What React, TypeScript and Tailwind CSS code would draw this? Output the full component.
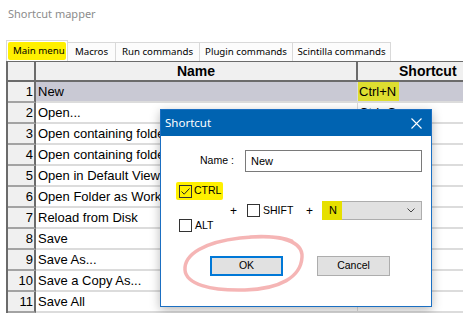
import React from "react";

const rows: [string, string][] = [
  ["New", "Ctrl+N"],
  ["Open...", "Ctrl+O"],
  ["Open containing folder - Explorer", ""],
  ["Open containing folder - cmd", ""],
  ["Open in Default Viewer", ""],
  ["Open Folder as Workspace", ""],
  ["Reload from Disk", ""],
  ["Save", ""],
  ["Save As...", ""],
  ["Save a Copy As...", ""],
  ["Save All", ""],
];

const tabs = [
  { label: "Macros", w: "w-[48px]" },
  { label: "Run commands", w: "w-[84px]" },
  { label: "Plugin commands", w: "w-[93px]" },
  { label: "Scintilla commands", w: "w-[98px]" },
];

function Checkbox({ checked, clear }: { checked?: boolean; clear?: boolean }) {
  return (
    <span
      className={`w-[13px] h-[13px] shrink-0 border border-[#333333] flex items-center justify-center ${
        clear ? "bg-transparent" : "bg-white"
      }`}
    >
      {checked && (
        <svg width="11" height="11" viewBox="0 0 11 11">
          <path d="M1.5 5.5 L4.2 8.2 L9.5 2.5" fill="none" stroke="#222" strokeWidth="1" />
        </svg>
      )}
    </span>
  );
}

function ShortcutDialog() {
  return (
    <div className="absolute left-[160px] top-[109px] w-[272px] h-[198px] border border-[#1b6fc2] bg-white shadow-[0_3px_10px_rgba(0,0,0,0.28)] font-['Liberation_Sans'] text-[10.5px] text-black">
      <div className="h-[26px] bg-[#0063b1] flex items-center justify-between pl-[4px] pr-[9px]">
        <span className="font-['Noto_Sans'] text-[11.5px] text-white">Shortcut</span>
        <svg width="11" height="11" viewBox="0 0 11 11">
          <path d="M0.5 0.5 L10.5 10.5 M10.5 0.5 L0.5 10.5" stroke="#fff" strokeWidth="1.1" />
        </svg>
      </div>

      <div className="pt-[14px]">
        <div className="flex items-center h-[22px]">
          <span className="ml-[39px] w-[45px]">Name :</span>
          <div className="w-[177px] h-[22px] border border-[#7a7a7a] pl-[5px] flex items-center text-[11px]">
            New
          </div>
        </div>

        <div className="mt-[10px] h-[18px] flex">
          <span className="ml-[15px] pl-[3px] pr-[2px] h-[18px] bg-[#fff000] flex items-center gap-[2px] rounded-[2px]">
            <Checkbox checked clear />
            <span>CTRL</span>
          </span>
        </div>

        <div className="mt-[1px] h-[19px] flex items-center">
          <span className="ml-[69px] w-[17px] text-[12px]">+</span>
          <Checkbox />
          <span className="ml-[3px] w-[43px]">SHIFT</span>
          <span className="w-[20px] text-[12px]">+</span>
          <div className="w-[96px] h-[19px] border border-[#adadad] bg-[#e1e1e1] flex items-center justify-between pr-[6px]">
            <span className="-ml-[5px] h-[19px] w-[20px] bg-[#e6e000] flex items-center pl-[7px] text-[11px]">N</span>
            <svg width="8" height="5" viewBox="0 0 8 5">
              <path d="M0.5 0.5 L4 4 L7.5 0.5" fill="none" stroke="#444" strokeWidth="1" />
            </svg>
          </div>
        </div>

        <div className="-mt-[1px] h-[13px] flex items-center">
          <span className="ml-[18px]">
            <Checkbox />
          </span>
          <span className="ml-[3px]">ALT</span>
        </div>

        <div className="mt-[24px] flex">
          <div className="ml-[49px] w-[73px] h-[20px] border-2 border-[#0078d7] bg-[#e1e1e1] flex items-center justify-center">
            OK
          </div>
          <div className="ml-[34px] w-[73px] h-[20px] border border-[#adadad] bg-[#e1e1e1] flex items-center justify-center">
            Cancel
          </div>
        </div>
      </div>
    </div>
  );
}

export default function App() {
  return (
    <div className="relative w-[463px] h-[313px] overflow-hidden bg-white">
      <div className="h-[40px] pl-[8px] pt-[6px] font-['Noto_Sans'] text-[11px] text-[#8c8c8c]">
        Shortcut mapper
      </div>

      <div className="ml-[6px] h-[21px] flex items-end font-['Noto_Sans'] text-[9.7px] text-black">
        <div className="w-[62px] h-[21px] border-t border-l border-r border-[#d9d9d9] bg-white p-[1px]">
          <div className="h-full bg-[#fff000] rounded-[2px] flex items-center pl-[5px]">Main menu</div>
        </div>
        {tabs.map((t) => (
          <div
            key={t.label}
            className={`${t.w} h-[19px] border-t border-r border-[#d9d9d9] bg-[#fcfcfc] flex items-center justify-center`}
          >
            {t.label}
          </div>
        ))}
      </div>

      <div className="ml-[6px] border-t border-l-2 border-[#6b6b6b] font-['Liberation_Sans'] text-[13px] text-black">
        <div className="h-[20px] flex bg-[#f0f0f0] border-b-2 border-[#6b6b6b]">
          <div className="w-[28px] shrink-0 border-r-2 border-[#6b6b6b]" />
          <div className="w-[322px] shrink-0 border-r-2 border-[#6b6b6b] flex items-center justify-center font-bold text-[14px]">
            Name
          </div>
          <div className="flex-1 flex items-center pl-[41px] font-bold text-[14px]">Shortcut</div>
        </div>

        {rows.map(([name, key], i) => (
          <div key={name} className="h-[21px] flex">
            <div className="w-[28px] shrink-0 bg-[#f0f0f0] border-r-2 border-b-2 border-[#a3a3a3] border-r-[#6b6b6b] flex items-center justify-end pr-[1px]">
              {i + 1}
            </div>
            <div
              className={`w-[322px] shrink-0 border-r border-b-2 border-[#dcdcdc] pl-[2px] flex items-center overflow-hidden whitespace-nowrap ${
                i === 0 ? "bg-[#c9c9d4]" : "bg-white"
              }`}
            >
              {name}
            </div>
            <div
              className={`flex-1 border-b-2 border-[#dcdcdc] flex items-center whitespace-nowrap ${
                i === 0 ? "bg-[#c9c9d4]" : "bg-white"
              }`}
            >
              {i === 0 ? (
                <span className="h-[19px] bg-[#dede30] flex items-center pl-[1px] pr-[3px]">{key}</span>
              ) : (
                <span className="pl-[1px]">{key}</span>
              )}
            </div>
          </div>
        ))}
      </div>

      <ShortcutDialog />

      <svg className="absolute left-[180px] top-[232px]" width="128" height="62" viewBox="0 0 128 62">
        <path
          d="M70 5 C100 3, 123 9, 122 25 C121 45, 100 57, 65 58 C30 59, 6 52, 5 38 C4 22, 25 10, 60 6 C80 4, 100 4, 112 9"
          fill="none"
          stroke="rgba(232,90,90,0.45)"
          strokeWidth="3.5"
          strokeLinecap="round"
        />
      </svg>
    </div>
  );
}
